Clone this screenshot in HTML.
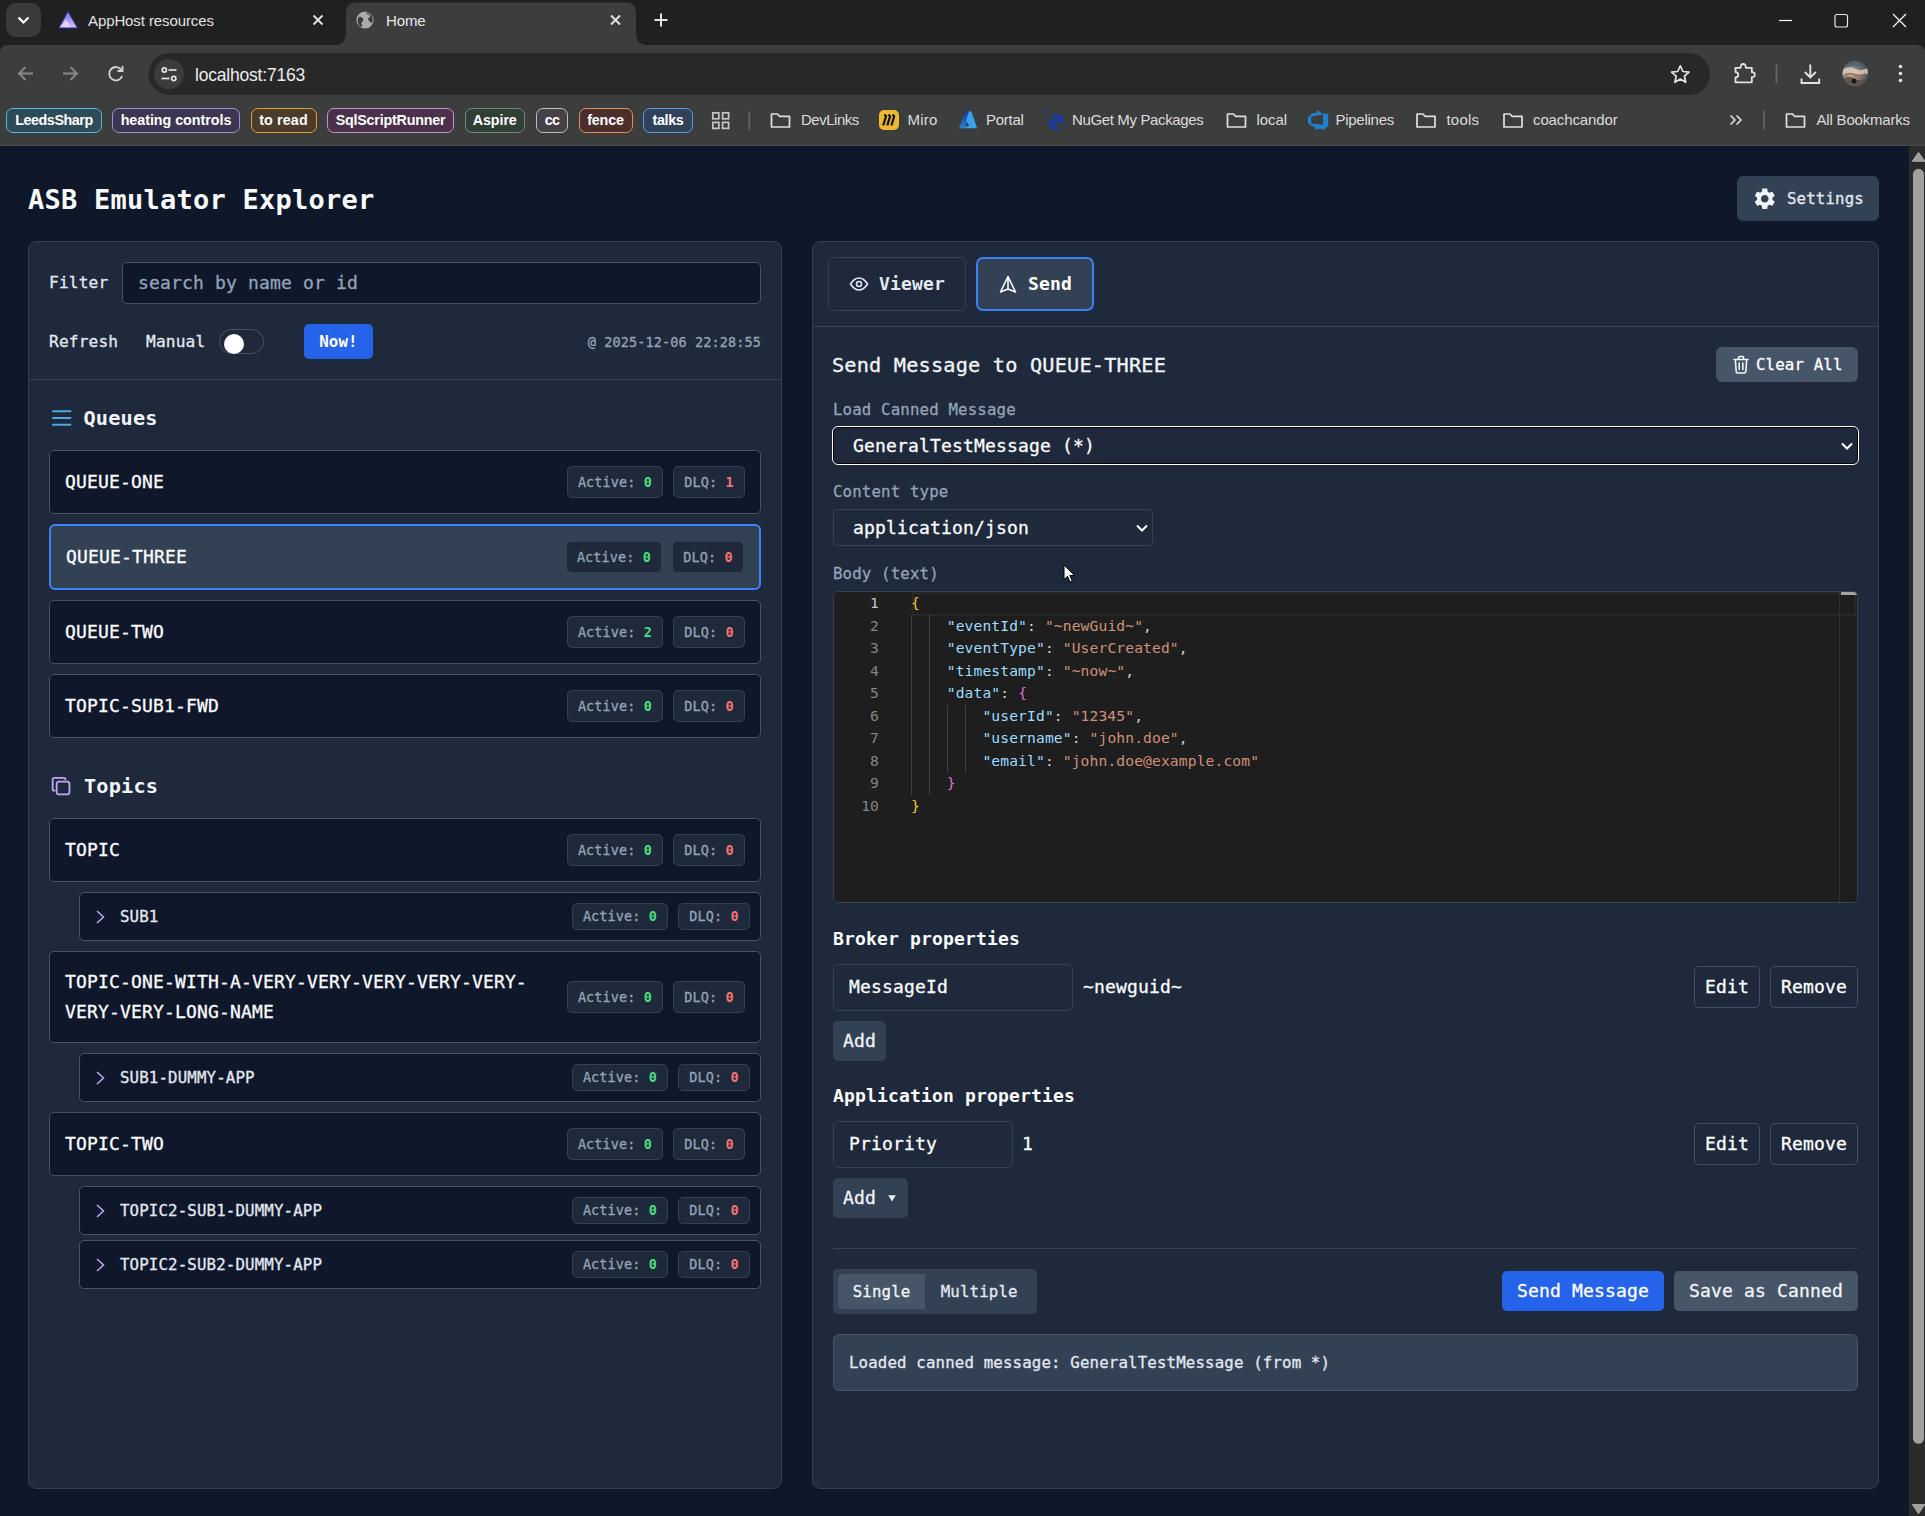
<!DOCTYPE html>
<html lang="en"><head><meta charset="utf-8"><title>Home</title>
<style>
*{box-sizing:border-box;margin:0;padding:0}
html,body{width:1925px;height:1516px;overflow:hidden;background:#0f172a}
body{position:relative;font-family:"DejaVu Sans Mono","Liberation Mono",monospace;color:#e2e8f0;-webkit-text-stroke:.3px}
.a{position:absolute}
.ui{font-family:"Liberation Sans","DejaVu Sans",sans-serif;-webkit-text-stroke:0}
.f30{font-size:27px;letter-spacing:.24px}
.f22{font-size:20.25px;letter-spacing:.18px}
.f20{font-size:18px;letter-spacing:.16px}
.f18{font-size:16.2px;letter-spacing:.144px}
.f17{font-size:15.75px;letter-spacing:.14px}
.f16{font-size:14.625px;letter-spacing:.13px}
.f15{font-size:13.5px;letter-spacing:.12px}
.b{font-weight:700;-webkit-text-stroke:0}
.nw{white-space:nowrap}
/* ---------- browser chrome ---------- */
.chip{-webkit-text-stroke:0;top:107.5px;height:25px;border-radius:7px;border:1.5px solid;font:700 14.3px/22px "Liberation Sans",sans-serif;color:#fff;text-align:center;white-space:nowrap}
.bm{-webkit-text-stroke:0;top:109px;height:22px;font:15px/22px "Liberation Sans",sans-serif;color:#dcdcdc;white-space:nowrap}
/* ---------- page ---------- */
.panel{background:#1e293b;border:1px solid #334155;border-radius:8.5px}
.row{left:49px;width:712px;height:64px;background:#0f172a;border:1px solid #465268;border-radius:5px}
.row .nm{position:absolute;left:15px;top:0;line-height:62px;color:#fbfcfe}
.sub{left:79px;width:682px;height:49px;background:#0f172a;border:1px solid #465268;border-radius:5px}
.sub .nm{position:absolute;left:40px;top:0;line-height:47px;color:#e2e8f0}
.sub svg{position:absolute;left:14px;top:16px}
.bd{position:absolute;height:32px;border:1px solid #334155;border-radius:5px;background:#1e293b;color:#94a3b8;line-height:30px;text-align:center;white-space:nowrap}
.bd b{font-weight:700;-webkit-text-stroke:0}
.g{color:#4ade80}.r{color:#f87171}
.row .ba{left:517px;top:15px;width:96px}
.row .bq{left:623px;top:15px;width:72px}
.sub .ba{left:492px;top:10px;width:96px;height:27px;line-height:25px}
.sub .bq{left:598px;top:10px;width:72px;height:27px;line-height:25px}
.btn{border-radius:5px;text-align:center;white-space:nowrap;color:#f1f5f9}
.ob{border:1px solid #434f66;border-radius:5px;text-align:center;line-height:40px;height:42px;color:#fff}
.y{color:#f5c728}.p{color:#da70d6}.k{color:#9cdcfe}.s{color:#ce9178}
</style></head>
<body>
<!-- ================= BROWSER CHROME ================= -->
<!--CHROME-START-->
<svg class="a" style="left:0;top:0" width="1925" height="146" viewBox="0 0 1925 146">
  <!-- toolbar rounded top corners are drawn by covering -->
  <rect x="0" y="0" width="1925" height="60" fill="#1f2020"/>
  <path d="M0,146 L0,53 Q0,45 8,45 L1917,45 Q1925,45 1925,53 L1925,146 Z" fill="#3c3d3d"/>
  <rect x="0" y="145" width="1925" height="1" fill="#484a49"/>
  <!-- tab search button -->
  <rect x="6" y="3" width="35" height="34" rx="10" fill="#393a3a"/>
  <path d="M18.5,17.5 L23.5,22.5 L28.5,17.5" fill="none" stroke="#fff" stroke-width="2.2"/>
  <!-- active tab -->
  <path d="M332,45.5 Q346,45.5 346,33 L346,13 Q346,2.5 356,2.5 L626,2.5 Q636,2.5 636,13 L636,33 Q636,45.5 650,45.5 Z" fill="#3c3d3d"/>
  <!-- aspire favicon -->
  <defs><linearGradient id="asp" x1="0" y1="0" x2="0.3" y2="1"><stop offset="0" stop-color="#6f7fe0"/><stop offset="0.55" stop-color="#9d8fe6"/><stop offset="1" stop-color="#cdbcf3"/></linearGradient></defs>
  <path d="M68,11.5 L77.5,28 L58.8,28 Z" fill="url(#asp)" stroke="#2b2ea8" stroke-width="1" stroke-linejoin="round"/>
  <path d="M60.5,27 L66,19.5 L71,27 Z" fill="#e6dcf8" opacity=".85"/>
  <!-- tab close icons -->
  <path d="M313.5,15.5 L322.5,24.5 M322.5,15.5 L313.5,24.5" stroke="#e3e3e3" stroke-width="1.9"/>
  <path d="M611,15.5 L620,24.5 M620,15.5 L611,24.5" stroke="#e3e3e3" stroke-width="1.9"/>
  <!-- globe -->
  <circle cx="365" cy="20" r="8.6" fill="#a9abae"/>
  <path d="M358.5,17 q3,-1 4.5,1.5 q1,2 -1,3.5 q-1.5,1.5 0.5,3.5 l-1.5,1.5 q-3,-2 -3.500,-6 z M366,12.500 q1,2.500 3.500,2 q1.500,1.500 0,3 q-2,0.500 -1.500,2.500 q2,0.500 2.500,2.500 l1.500,0.500 q1.500,-3.500 0,-7 q-2,-3.500 -6,-3.500z" fill="#3c3d3d"/>
  <!-- new tab plus -->
  <path d="M654.500,20 L667.500,20 M661,13.500 L661,26.500" stroke="#e3e3e3" stroke-width="2"/>
  <!-- window controls -->
  <path d="M1779,20.500 L1792,20.500" stroke="#fff" stroke-width="1.200"/>
  <rect x="1835" y="14.500" width="12.500" height="12.500" rx="2" fill="none" stroke="#e9e4f0" stroke-width="1.200"/>
  <path d="M1893,14 L1906,27 M1906,14 L1893,27" stroke="#fff" stroke-width="1.200"/>
  <!-- nav arrows -->
  <path d="M33,73.500 L19,73.500 M25.500,67 L19,73.500 L25.500,80" fill="none" stroke="#8d878a" stroke-width="1.800"/>
  <path d="M63,73.500 L77,73.500 M70.500,67 L77,73.500 L70.500,80" fill="none" stroke="#8d878a" stroke-width="1.800"/>
  <path d="M121.500,70 A6.700,6.700 0 1 0 122.200,76" fill="none" stroke="#d6d6d6" stroke-width="1.800"/>
  <path d="M122.500,66 L122.500,71 L117.500,71" fill="none" stroke="#d6d6d6" stroke-width="1.800"/>
  <!-- omnibox -->
  <rect x="148.500" y="53" width="1561.500" height="42" rx="21" fill="#282828"/>
  <circle cx="169" cy="74.200" r="15" fill="#3c3c3c"/>
  <g stroke="#e3e3e3" stroke-width="1.700" fill="none"><circle cx="164.300" cy="70" r="2.100"/><path d="M168.500,70 L176.500,70"/><circle cx="173.800" cy="78.500" r="2.100"/><path d="M161.500,78.500 L169.500,78.500"/></g>
  <!-- star -->
  <path d="M1680.300,65.800 L1682.900,71.500 L1689,72.100 L1684.400,76.200 L1685.700,82.300 L1680.300,79.100 L1674.900,82.300 L1676.200,76.200 L1671.600,72.100 L1677.700,71.500 Z" fill="none" stroke="#e3e3e3" stroke-width="1.700" stroke-linejoin="round"/>
  <!-- extensions puzzle -->
  <path d="M1735.500,67.800 L1740.600,67.800 Q1740.400,64 1743.200,64 Q1746,64 1745.800,67.800 L1751.800,67.800 L1751.800,72.200 Q1754.800,72 1754.800,74.700 Q1754.800,77.400 1751.800,77.200 L1751.800,82.300 L1735.500,82.300 L1735.500,77.400 Q1738.300,77.400 1738.300,74.800 Q1738.300,72.200 1735.500,72.200 Z" fill="none" stroke="#e3e3e3" stroke-width="1.800" stroke-linejoin="round"/>
  <rect x="1775.500" y="64" width="2" height="19.500" rx="1" fill="#5f6172"/>
  <!-- download -->
  <path d="M1810.300,64.500 L1810.300,77 M1804.800,72 L1810.300,77.500 L1815.800,72 M1801.500,78.500 L1801.500,83 L1819.200,83 L1819.200,78.500" fill="none" stroke="#e3e3e3" stroke-width="1.900"/>
  <!-- avatar -->
  <defs><radialGradient id="av1" cx=".35" cy=".55" r=".7"><stop offset="0" stop-color="#b9a595"/><stop offset=".45" stop-color="#8a7b72"/><stop offset="1" stop-color="#3a4a55"/></radialGradient>
  <clipPath id="avc"><circle cx="1855.300" cy="73.500" r="12.700"/></clipPath></defs>
  <circle cx="1855.300" cy="73.500" r="12.700" fill="url(#av1)"/>
  <g clip-path="url(#avc)"><path d="M1842,70 q7,-5 14,-1 q6,3 13,-2 l0,6 q-7,4 -13,1 q-7,-3 -14,2z" fill="#d9d2cc" opacity=".8"/><path d="M1843,79 q6,-4 12,0 q5,3 13,-1 l0,9 l-25,0z" fill="#5b524e" opacity=".9"/><circle cx="1854" cy="81" r="2.500" fill="#16181a"/><path d="M1846,64 q8,-4 17,0 l0,3 q-8,-3 -17,0z" fill="#4d6472" opacity=".9"/><path d="M1845,74.500 q5,-2 9,0 q5,2 12,-1" stroke="#a5603d" stroke-width="1.500" fill="none" opacity=".8"/></g>
  <!-- menu dots -->
  <circle cx="1900.500" cy="66.500" r="1.800" fill="#e3e3e3"/><circle cx="1900.500" cy="73.500" r="1.800" fill="#e3e3e3"/><circle cx="1900.500" cy="80.500" r="1.800" fill="#e3e3e3"/>
  <!-- bookmarks bar icons -->
  <g fill="none" stroke="#c7c7c7" stroke-width="1.700"><rect x="712.800" y="112.800" width="6" height="6"/><rect x="722.600" y="112.800" width="6" height="6"/><rect x="712.800" y="122.400" width="6" height="6"/><rect x="722.600" y="122.400" width="6" height="6"/></g>
  <rect x="748.300" y="111" width="2" height="19" rx="1" fill="#5c5e70"/>
  <rect x="1763" y="110.600" width="2" height="19" rx="1" fill="#5c5e70"/>
  <path d="M1730.500,115.500 L1735,120 L1730.500,124.500 M1736.500,115.500 L1741,120 L1736.500,124.500" fill="none" stroke="#dcdcdc" stroke-width="1.600"/>
  <g id="fold" fill="none" stroke="#e0e0e0" stroke-width="1.700" stroke-linejoin="round">
    <path id="fp" d="M771.500,114 L777.500,114 L779.500,116.300 L789.500,116.300 L789.500,127 L771.500,127 Z"/>
  </g>
  <use href="#fp" x="456" fill="none" stroke="#e0e0e0" stroke-width="1.700" stroke-linejoin="round"/>
  <use href="#fp" x="645.500" fill="none" stroke="#e0e0e0" stroke-width="1.700" stroke-linejoin="round"/>
  <use href="#fp" x="732.500" fill="none" stroke="#e0e0e0" stroke-width="1.700" stroke-linejoin="round"/>
  <use href="#fp" x="1015" fill="none" stroke="#e0e0e0" stroke-width="1.700" stroke-linejoin="round"/>
  <!-- miro -->
  <rect x="879" y="110" width="20" height="20" rx="5" fill="#ebba2e"/>
  <path d="M883.200,125.300 L886,116.300 L884.400,114.500 M887.300,125.300 L890.100,116.300 L888.500,114.500 M891.400,125.300 L894.200,116.300 L892.600,114.500" fill="none" stroke="#151515" stroke-width="2.200" stroke-linejoin="round"/>
  <!-- azure A -->
  <defs><linearGradient id="azl" x1="0" y1="0" x2="0" y2="1"><stop offset="0" stop-color="#17349a"/><stop offset="1" stop-color="#2c7fd4"/></linearGradient></defs><path d="M965.400,111.300 L971,111.300 L964.800,128.200 L958.900,128.200 Z" fill="url(#azl)"/><path d="M968.900,111.300 L971.300,111.300 L977.100,128.200 L962.800,128.200 L969.300,125.400 L966,120.800 Z" fill="#37a2ea"/>
  <!-- nuget -->
  <circle cx="1056" cy="122" r="8.200" fill="#1f3a95"/><circle cx="1045.400" cy="111.800" r="1.800" fill="#1f3a95"/><circle cx="1052.200" cy="118.200" r="2" fill="#3c3d3d"/><circle cx="1059.300" cy="125.300" r="3.100" fill="#3c3d3d"/>
  <!-- azure devops pipelines -->
  <path d="M1308,117.500 L1312,113.600 L1316.500,112.700 L1317.300,110 L1321.800,113.500 L1328.200,113.700 L1328.200,126 L1323.500,130 L1320.500,128.500 L1315.500,129.600 L1315,127.500 L1308,123.600 Z" fill="#1f80d0"/><path d="M1311.200,116.600 L1323,114.600 L1323,124.700 L1311.200,123.500 Z" fill="#3c3d3d"/>
</svg>
<div class="a ui nw" style="left:88px;top:10.6px;font-size:15px;line-height:20px;color:#e1e1e1;letter-spacing:-.1px">AppHost resources</div>
<div class="a ui nw" style="left:386px;top:10.6px;font-size:15px;line-height:20px;color:#e8e8e8;letter-spacing:-.1px">Home</div>
<div class="a ui nw" id="url" style="left:195px;top:64px;font-size:17.500px;line-height:22px;color:#ececec;letter-spacing:-.2px">localhost:7163</div>
<div class="a chip" style="left:6px;width:96px;border-color:#5fb3dc;background:#2e4b58;letter-spacing:-0.43px">LeedsSharp</div>
<div class="a chip" style="left:112px;width:128px;border-color:#a98fdb;background:#3d3653;letter-spacing:-0.03px">heating controls</div>
<div class="a chip" style="left:250.500px;width:66px;border-color:#e0a233;background:#4b3d29;letter-spacing:0.14px">to read</div>
<div class="a chip" style="left:327px;width:127px;border-color:#c690c8;background:#4a304b;letter-spacing:-0.21px">SqlScriptRunner</div>
<div class="a chip" style="left:464.500px;width:60.500px;border-color:#70897a;background:#303f36;letter-spacing:-0.09px">Aspire</div>
<div class="a chip" style="left:536px;width:32px;border-color:#bdbdbd;background:#464147;letter-spacing:-0.60px">cc</div>
<div class="a chip" style="left:578.500px;width:54px;border-color:#e09352;background:#4b2d2d;letter-spacing:-0.15px">fence</div>
<div class="a chip" style="left:643px;width:50px;border-color:#5c9ce2;background:#304159;letter-spacing:-0.31px">talks</div>
<div class="a bm" style="left:801px;letter-spacing:-0.49px">DevLinks</div>
<div class="a bm" style="left:907.500px;letter-spacing:0.24px">Miro</div>
<div class="a bm" style="left:986px;letter-spacing:-0.27px">Portal</div>
<div class="a bm" style="left:1072px;letter-spacing:-0.36px">NuGet My Packages</div>
<div class="a bm" style="left:1256.500px;letter-spacing:-0.06px">local</div>
<div class="a bm" style="left:1335.500px;letter-spacing:-0.27px">Pipelines</div>
<div class="a bm" style="left:1446.500px;letter-spacing:0.20px">tools</div>
<div class="a bm" style="left:1533px;letter-spacing:-0.12px">coachcandor</div>
<div class="a bm" style="left:1816.500px;letter-spacing:-0.19px">All Bookmarks</div>
<!--CHROME-END-->
<!-- ================= PAGE ================= -->
<!--LEFT-START-->
<div class="a b f30 nw" style="left:28px;top:181px;line-height:38px;color:#f8fafc">ASB Emulator Explorer</div>
<!-- left panel -->
<div class="a panel" style="left:28px;top:241px;width:754px;height:1248px"></div>
<div class="a f18 nw" style="left:49px;top:272px;line-height:22px;color:#e2e8f0">Filter</div>
<div class="a" style="left:122px;top:262px;width:639px;height:42px;background:#0f172a;border:1px solid #465268;border-radius:5px"></div>
<div class="a f20 nw" style="left:138px;top:271px;line-height:24px;color:#94a3b8">search by name or id</div>
<div class="a f18 nw" style="left:49px;top:331px;line-height:22px;color:#e2e8f0">Refresh</div>
<div class="a f18 nw" style="left:146px;top:331px;line-height:22px;color:#e2e8f0">Manual</div>
<div class="a" style="left:219px;top:329px;width:45px;height:25px;border:1.5px solid #475569;border-radius:13px;background:#1e293b"></div>
<div class="a" style="left:224px;top:334px;width:20px;height:20px;border-radius:10px;background:#fff"></div>
<div class="a b f17 nw" style="left:304px;top:324px;width:69px;height:35px;line-height:36px;border-radius:5px;background:#2563eb;color:#fff;text-align:center">Now!</div>
<div class="a f15 nw" style="left:561px;top:332px;width:200px;text-align:right;line-height:20px;color:#94a3b8">@ 2025-12-06 22:28:55</div>
<div class="a" style="left:29px;top:379px;width:752px;height:1px;background:#334155"></div>
<!-- Queues -->
<svg class="a" style="left:50px;top:407px" width="24" height="22" viewBox="0 0 24 22"><path d="M3,4.300 L20.500,4.300 M3,11 L20.500,11 M3,17.700 L20.500,17.700" stroke="#4fa6e4" stroke-width="1.900" stroke-linecap="round"/></svg>
<div class="a b f22 nw" style="left:83.5px;top:404px;line-height:28px;color:#f1f5f9">Queues</div>
<div class="a row" style="top:450px"><span class="nm f20">QUEUE-ONE</span><span class="bd ba f15">Active: <b class="g">0</b></span><span class="bd bq f15">DLQ: <b class="r">1</b></span></div>
<div class="a row" style="top:524px;height:66px;border:2px solid #3b82f6;background:#334155;border-radius:6px"><span class="nm f20" style="left:15px;top:0">QUEUE-THREE</span><span class="bd ba f15" style="left:515px;top:15px;border-color:#334155">Active: <b class="g">0</b></span><span class="bd bq f15" style="left:621px;top:15px;border-color:#334155">DLQ: <b class="r">0</b></span></div>
<div class="a row" style="top:600px"><span class="nm f20">QUEUE-TWO</span><span class="bd ba f15">Active: <b class="g">2</b></span><span class="bd bq f15">DLQ: <b class="r">0</b></span></div>
<div class="a row" style="top:674px"><span class="nm f20">TOPIC-SUB1-FWD</span><span class="bd ba f15">Active: <b class="g">0</b></span><span class="bd bq f15">DLQ: <b class="r">0</b></span></div>
<!-- Topics -->
<svg class="a" style="left:50.4px;top:774.5px" width="22.8" height="22.8" viewBox="0 0 24 24"><g fill="none" stroke="#c4a6f6" stroke-width="1.900" stroke-linejoin="round"><path d="M5.500,16.500 L4.500,16.500 Q2.800,16.500 2.800,14.800 L2.800,5 Q2.800,3 4.800,3 L14.500,3 Q16.300,3 16.300,4.800 L16.300,5.500"/><rect x="7" y="7" width="13.500" height="13.500" rx="2.600"/></g></svg>
<div class="a b f22 nw" style="left:84px;top:772px;line-height:28px;color:#f1f5f9">Topics</div>
<div class="a row" style="top:818px"><span class="nm f20">TOPIC</span><span class="bd ba f15">Active: <b class="g">0</b></span><span class="bd bq f15">DLQ: <b class="r">0</b></span></div>
<div class="a sub" style="top:892px"><svg width="12" height="16" viewBox="0 0 12 16"><path d="M3,2 L9.500,8 L3,14" fill="none" stroke="#c0a3f2" stroke-width="1.600"/></svg><span class="nm f17">SUB1</span><span class="bd ba f15">Active: <b class="g">0</b></span><span class="bd bq f15">DLQ: <b class="r">0</b></span></div>
<div class="a row" style="top:951px;height:92px"><span class="nm f20" style="top:15px;line-height:30px;width:480px;word-break:break-all;white-space:normal">TOPIC-ONE-WITH-A-VERY-VERY-VERY-VERY-VERY-<br>VERY-VERY-LONG-NAME</span><span class="bd ba f15" style="top:29px">Active: <b class="g">0</b></span><span class="bd bq f15" style="top:29px">DLQ: <b class="r">0</b></span></div>
<div class="a sub" style="top:1053px"><svg width="12" height="16" viewBox="0 0 12 16"><path d="M3,2 L9.500,8 L3,14" fill="none" stroke="#c0a3f2" stroke-width="1.600"/></svg><span class="nm f17">SUB1-DUMMY-APP</span><span class="bd ba f15">Active: <b class="g">0</b></span><span class="bd bq f15">DLQ: <b class="r">0</b></span></div>
<div class="a row" style="top:1112px"><span class="nm f20">TOPIC-TWO</span><span class="bd ba f15">Active: <b class="g">0</b></span><span class="bd bq f15">DLQ: <b class="r">0</b></span></div>
<div class="a sub" style="top:1186px"><svg width="12" height="16" viewBox="0 0 12 16"><path d="M3,2 L9.500,8 L3,14" fill="none" stroke="#c0a3f2" stroke-width="1.600"/></svg><span class="nm f17">TOPIC2-SUB1-DUMMY-APP</span><span class="bd ba f15">Active: <b class="g">0</b></span><span class="bd bq f15">DLQ: <b class="r">0</b></span></div>
<div class="a sub" style="top:1240px"><svg width="12" height="16" viewBox="0 0 12 16"><path d="M3,2 L9.500,8 L3,14" fill="none" stroke="#c0a3f2" stroke-width="1.600"/></svg><span class="nm f17">TOPIC2-SUB2-DUMMY-APP</span><span class="bd ba f15">Active: <b class="g">0</b></span><span class="bd bq f15">DLQ: <b class="r">0</b></span></div>
<!--LEFT-END-->
<!--RIGHT-START-->
<!-- settings -->
<div class="a" style="left:1737px;top:176px;width:142px;height:45px;border-radius:6px;background:#334155"></div>
<svg class="a" style="left:1751.6px;top:185.7px" width="25.5" height="25.5" viewBox="0 0 24 24"><path fill="#f1f5f9" d="M19.140,12.940c0.040-0.300,0.060-0.610,0.060-0.940c0-0.320-0.020-0.640-0.070-0.940l2.030-1.580c0.180-0.140,0.230-0.410,0.120-0.610l-1.920-3.320c-0.120-0.220-0.370-0.290-0.590-0.220l-2.390,0.960c-0.500-0.380-1.030-0.700-1.620-0.940L14.400,2.810c-0.040-0.240-0.240-0.410-0.480-0.410h-3.840c-0.240,0-0.430,0.170-0.470,0.410L9.250,5.350C8.660,5.590,8.120,5.920,7.630,6.290L5.240,5.330c-0.220-0.080-0.470,0-0.590,0.220L2.740,8.870C2.620,9.080,2.660,9.340,2.860,9.480l2.030,1.580C4.840,11.360,4.800,11.690,4.800,12s0.020,0.640,0.070,0.940l-2.030,1.580c-0.180,0.140-0.230,0.410-0.120,0.610l1.920,3.320c0.120,0.220,0.370,0.290,0.590,0.220l2.390-0.960c0.500,0.380,1.030,0.700,1.620,0.940l0.360,2.540c0.050,0.240,0.240,0.410,0.480,0.410h3.840c0.240,0,0.440-0.170,0.470-0.410l0.360-2.540c0.590-0.240,1.130-0.560,1.620-0.940l2.390,0.960c0.220,0.080,0.470,0,0.590-0.220l1.920-3.320c0.120-0.220,0.070-0.470-0.120-0.610L19.140,12.940z M12,15.600c-1.980,0-3.600-1.620-3.600-3.600s1.620-3.600,3.600-3.600s3.600,1.620,3.600,3.600S13.980,15.600,12,15.600z"/></svg>
<div class="a f17 nw" style="left:1787px;top:188px;line-height:22px;color:#e2e8f0">Settings</div>
<!-- right panel -->
<div class="a panel" style="left:812px;top:241px;width:1067px;height:1248px"></div>
<div class="a" style="left:828px;top:257px;width:138px;height:54px;border:1px solid #334155;border-radius:6px"></div>
<svg class="a" style="left:848px;top:273px" width="22" height="22" viewBox="0 0 22 22"><g fill="none" stroke="#e2e8f0" stroke-width="1.600"><path d="M2.500,11 Q6.300,5 11,5 Q15.700,5 19.500,11 Q15.700,17 11,17 Q6.300,17 2.500,11 Z"/><circle cx="11" cy="11" r="2.500"/></g></svg>
<div class="a b f20 nw" style="left:879px;top:271px;line-height:26px;color:#e2e8f0">Viewer</div>
<div class="a" style="left:976px;top:257px;width:118px;height:54px;border:2px solid #3b82f6;border-radius:7px;background:#334155"></div>
<svg class="a" style="left:997px;top:273px" width="22" height="22" viewBox="0 0 22 22"><path d="M11,3.500 L18.500,19 L11,16 L3.500,19 Z M11,3.500 L11,16" fill="none" stroke="#fff" stroke-width="1.600" stroke-linejoin="round"/></svg>
<div class="a b f20 nw" style="left:1028px;top:271px;line-height:26px;color:#fff">Send</div>
<div class="a" style="left:813px;top:326px;width:1065px;height:1px;background:#334155"></div>
<div class="a f22 nw" style="left:832px;top:351px;line-height:28px;color:#f1f5f9">Send Message to QUEUE-THREE</div>
<div class="a" style="left:1716px;top:347px;width:142px;height:35px;border-radius:6px;background:#475569"></div>
<svg class="a" style="left:1731px;top:354px" width="20" height="22" viewBox="0 0 20 22"><g fill="none" stroke="#f1f5f9" stroke-width="1.600" stroke-linejoin="round" stroke-linecap="round"><path d="M3,5.500 L17,5.500 M7.500,5.500 L7.500,3.500 Q7.500,2.500 8.500,2.500 L11.500,2.500 Q12.500,2.500 12.500,3.500 L12.500,5.500 M4.300,5.500 L5.200,17.500 Q5.300,19 6.800,19 L13.200,19 Q14.700,19 14.800,17.500 L15.700,5.500 M8.200,9 L8.200,15.500 M11.800,9 L11.800,15.500"/></g></svg>
<div class="a f17 nw" style="left:1756px;top:353.5px;line-height:22px;color:#fff">Clear All</div>
<div class="a f17 nw" style="left:833px;top:399px;line-height:22px;color:#94a3b8">Load Canned Message</div>
<div class="a" style="left:832px;top:426px;width:1027px;height:39px;border:1px solid #fff;box-shadow:inset 0 0 0 1px #000;border-radius:6px;background:#1e293b"></div>
<div class="a f20 nw" style="left:853px;top:433px;line-height:26px;color:#fbfcfe">GeneralTestMessage (*)</div>
<svg class="a" style="left:1839px;top:439.5px" width="16" height="12" viewBox="0 0 16 12"><path d="M3,3.500 L8,8.500 L13,3.500" fill="none" stroke="#fff" stroke-width="2"/></svg>
<div class="a f17 nw" style="left:833px;top:481px;line-height:22px;color:#94a3b8">Content type</div>
<div class="a" style="left:833px;top:509px;width:320px;height:37px;border:1px solid #334155;border-radius:4px;background:#1e293b"></div>
<div class="a f20 nw" style="left:853px;top:515px;line-height:26px;color:#fbfcfe">application/json</div>
<svg class="a" style="left:1134px;top:521.5px" width="16" height="12" viewBox="0 0 16 12"><path d="M3,3.500 L8,8.500 L13,3.500" fill="none" stroke="#fff" stroke-width="2"/></svg>
<div class="a f17 nw" style="left:833px;top:563px;line-height:22px;color:#94a3b8">Body (text)</div>
<!-- cursor -->
<svg class="a" style="left:1063px;top:564px;z-index:5" width="14" height="20" viewBox="0 0 14 20"><path d="M1,1 L1,15.500 L4.500,12.300 L7,18 L9.300,17 L6.800,11.500 L11.500,11.500 Z" fill="#fff" stroke="#000" stroke-width="1"/></svg>
<!-- editor -->
<div class="a" id="ed" style="left:833px;top:591px;width:1025px;height:312px;background:#1e1e1e;border:1px solid #334155;border-radius:5px;overflow:hidden;-webkit-text-stroke:0">
  <div class="a" style="left:78px;top:0;width:944px;height:23.500px;border:2px solid #282828"></div>
  <div class="a" style="left:1005px;top:0;width:1px;height:312px;background:#303030"></div>
  <div class="a" style="left:1007px;top:0;width:17px;height:2.500px;background:#a3a3a3"></div>
  <div class="a" style="left:77px;top:23px;width:1px;height:180px;background:#404040"></div>
  <div class="a" style="left:95px;top:23px;width:1px;height:180px;background:#404040"></div>
  <div class="a" style="left:113px;top:113px;width:1px;height:67.500px;background:#404040"></div>
  <div class="a" style="left:131px;top:113px;width:1px;height:67.500px;background:#404040"></div>
  <pre class="a" id="ln" style="left:0;top:0.3px;width:45px;text-align:right;font-family:inherit;font-size:14.625px;letter-spacing:.13px;line-height:22.500px;color:#858585"><span style="color:#c6c6c6">1</span>
2
3
4
5
6
7
8
9
10</pre>
  <pre class="a" id="code" style="left:77px;top:0.3px;font-family:inherit;font-size:14.625px;letter-spacing:.13px;line-height:22.500px;color:#d4d4d4"><span class="y">{</span>
    <span class="k">"eventId"</span>: <span class="s">"~newGuid~"</span>,
    <span class="k">"eventType"</span>: <span class="s">"UserCreated"</span>,
    <span class="k">"timestamp"</span>: <span class="s">"~now~"</span>,
    <span class="k">"data"</span>: <span class="p">{</span>
        <span class="k">"userId"</span>: <span class="s">"12345"</span>,
        <span class="k">"username"</span>: <span class="s">"john.doe"</span>,
        <span class="k">"email"</span>: <span class="s">"john.doe@example.com"</span>
    <span class="p">}</span>
<span class="y">}</span></pre>
</div>
<!-- broker props -->
<div class="a b f20 nw" style="left:833px;top:926px;line-height:26px;color:#fbfcfe">Broker properties</div>
<div class="a" style="left:833px;top:964px;width:240px;height:47px;border:1px solid #334155;border-radius:5px"></div>
<div class="a f20 nw" style="left:849px;top:974px;line-height:26px;color:#fbfcfe">MessageId</div>
<div class="a f20 nw" style="left:1083px;top:974px;line-height:26px;color:#fbfcfe">~newguid~</div>
<div class="a ob f20" style="left:1694px;top:966px;width:66px">Edit</div>
<div class="a ob f20" style="left:1770px;top:966px;width:88px">Remove</div>
<div class="a btn f20" style="left:833px;top:1021px;width:53px;height:40px;line-height:39px;background:#334155">Add</div>
<div class="a b f20 nw" style="left:833px;top:1083px;line-height:26px;color:#fbfcfe">Application properties</div>
<div class="a" style="left:833px;top:1121px;width:180px;height:47px;border:1px solid #334155;border-radius:5px"></div>
<div class="a f20 nw" style="left:849px;top:1131px;line-height:26px;color:#fbfcfe">Priority</div>
<div class="a f20 nw" style="left:1022px;top:1131px;line-height:26px;color:#fbfcfe">1</div>
<div class="a ob f20" style="left:1694px;top:1123px;width:66px">Edit</div>
<div class="a ob f20" style="left:1770px;top:1123px;width:88px">Remove</div>
<div class="a btn f20" style="left:833px;top:1178px;width:75px;height:40px;line-height:39px;background:#334155;text-align:left;padding-left:10px">Add</div>
<svg class="a" style="left:886.5px;top:1193px" width="10" height="10" viewBox="0 0 10 10"><path d="M1.200,2.300 L8.800,2.300 L5,8.600 Z" fill="#e8edf3"/></svg>
<div class="a" style="left:833px;top:1248px;width:1025px;height:1px;background:#334155"></div>
<!-- bottom actions -->
<div class="a" style="left:833px;top:1269px;width:204px;height:45px;border-radius:5px;background:#334155"></div>
<div class="a" style="left:838px;top:1274px;width:87px;height:35px;border-radius:5px 0 0 5px;background:#475569"></div>
<div class="a f17 nw" style="left:852.7px;top:1281px;line-height:22px;color:#f1f5f9">Single</div>
<div class="a f17 nw" style="left:940.7px;top:1281px;line-height:22px;color:#e2e8f0">Multiple</div>
<div class="a btn f20" style="left:1502px;top:1271px;width:162px;height:40px;line-height:39px;background:#2563eb;color:#fff;border-radius:5px">Send Message</div>
<div class="a btn f20" style="left:1674px;top:1271px;width:184px;height:40px;line-height:39px;background:#475569;color:#f1f5f9;border-radius:5px">Save as Canned</div>
<div class="a" style="left:833px;top:1334px;width:1025px;height:57px;border:1px solid #475569;border-radius:6px;background:#334155"></div>
<div class="a f17 nw" style="left:849px;top:1352px;line-height:22px;color:#e2e8f0">Loaded canned message: GeneralTestMessage (from *)</div>
<!-- page scrollbar -->
<div class="a" style="left:1909px;top:146px;width:16px;height:1370px;background:#2b2b2b"></div>
<svg class="a" style="left:1909px;top:146px" width="16" height="1370" viewBox="0 0 16 1370"><path d="M3.300,15.300 L9.500,6.300 L16,15.300 Z" fill="#a0a0a0" stroke="#a0a0a0" stroke-width="1" stroke-linejoin="round"/><path d="M3.300,1358.500 L9.500,1367.800 L16,1358.500 Z" fill="#a0a0a0" stroke="#a0a0a0" stroke-width="1" stroke-linejoin="round"/><rect x="4" y="22.800" width="11" height="1275" rx="5.500" fill="#a0a0a0"/></svg>
<!--RIGHT-END-->
</body></html>
